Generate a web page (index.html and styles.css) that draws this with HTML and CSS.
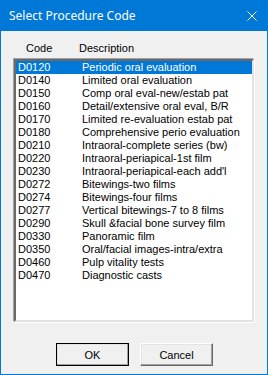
FILE: index.html
```html
<!DOCTYPE html>
<html lang="en">

<head>
    <meta charset="UTF-8">
    <title>Select Procedure Code</title>
    <link rel="stylesheet" href="styles.css">
</head>

<body>
    <div class="dlg">
        <div class="titlebar">
            <span class="title">Select Procedure Code</span>
            <svg class="close" width="10" height="10" viewBox="0 0 10 10">
                <path d="M0.5 0.5L9.5 9.5M9.5 0.5L0.5 9.5" stroke="#fff" stroke-width="1" fill="none"/>
            </svg>
        </div>
        <div class="body">
            <div class="head">
                <span class="hcode">Code</span>
                <span class="hdesc">Description</span>
            </div>
            <ul class="list">
                <li class="sel"><span class="code">D0120</span><span>Periodic oral evaluation</span></li>
                <li><span class="code">D0140</span><span>Limited oral evaluation</span></li>
                <li><span class="code">D0150</span><span>Comp oral eval-new/estab pat</span></li>
                <li><span class="code">D0160</span><span>Detail/extensive oral eval, B/R</span></li>
                <li><span class="code">D0170</span><span>Limited re-evaluation estab pat</span></li>
                <li><span class="code">D0180</span><span>Comprehensive perio evaluation</span></li>
                <li><span class="code">D0210</span><span>Intraoral-complete series (bw)</span></li>
                <li><span class="code">D0220</span><span>Intraoral-periapical-1st film</span></li>
                <li><span class="code">D0230</span><span>Intraoral-periapical-each add'l</span></li>
                <li><span class="code">D0272</span><span>Bitewings-two films</span></li>
                <li><span class="code">D0274</span><span>Bitewings-four films</span></li>
                <li><span class="code">D0277</span><span>Vertical bitewings-7 to 8 films</span></li>
                <li><span class="code">D0290</span><span>Skull &amp;facial bone survey film</span></li>
                <li><span class="code">D0330</span><span>Panoramic film</span></li>
                <li><span class="code">D0350</span><span>Oral/facial images-intra/extra</span></li>
                <li><span class="code">D0460</span><span>Pulp vitality tests</span></li>
                <li><span class="code">D0470</span><span>Diagnostic casts</span></li>
            </ul>
            <div class="buttons">
                <button class="btn def">OK</button>
                <button class="btn">Cancel</button>
            </div>
        </div>
    </div>
</body>

</html>
```

FILE: styles.css
```css
* {
    margin: 0;
    padding: 0;
    box-sizing: border-box;
}

body {
    font-family: "Liberation Sans", Arial, sans-serif;
    font-size: 11px;
    color: #000;
}

.dlg {
    width: 268px;
    height: 375px;
    border: 1px solid #0078d7;
    border-top: 0;
    background-color: #f0f0f0;
}

.titlebar {
    height: 31px;
    margin: 0 -1px;
    background-color: #0078d7;
    display: flex;
    align-items: center;
    padding: 0 11px 0 9px;
}

.title {
    flex: 1;
    color: #fff;
    font-family: "Noto Sans", sans-serif;
    font-size: 12px;
    padding-bottom: 1px;
}

.close {
    display: block;
}

.body {
    padding: 11px 0 0 12px;
}

.head {
    display: flex;
    height: 17px;
    line-height: 13px;
}

.hcode {
    width: 66px;
    padding-left: 13px;
}

.list {
    list-style: none;
    width: 240px;
    height: 263px;
    background-color: #fff;
    border: 2px solid;
    border-color: #696969 #e3e3e3 #e3e3e3 #696969;
    box-shadow: -1px -1px 0 #a0a0a0, 1px 1px 0 #fff;
    margin-left: 1px;
}

.list li {
    display: flex;
    height: 13px;
    line-height: 13px;
    padding-left: 2px;
    white-space: nowrap;
}

.list .code {
    width: 64px;
}

.list .sel {
    background-color: #0078d7;
    color: #fff;
}

.buttons {
    display: flex;
    gap: 11px;
    margin: 21px 0 0 43px;
}

.btn {
    width: 73px;
    height: 23px;
    font-family: "Liberation Sans", Arial, sans-serif;
    font-size: 11px;
    background-color: #f0f0f0;
    border: 1px solid;
    border-color: #fff #696969 #696969 #fff;
    box-shadow: inset -1px -1px 0 #a0a0a0, inset 1px 1px 0 #e3e3e3;
}

.def {
    outline: 1px solid #000;
    outline-offset: -1px;
}
```
